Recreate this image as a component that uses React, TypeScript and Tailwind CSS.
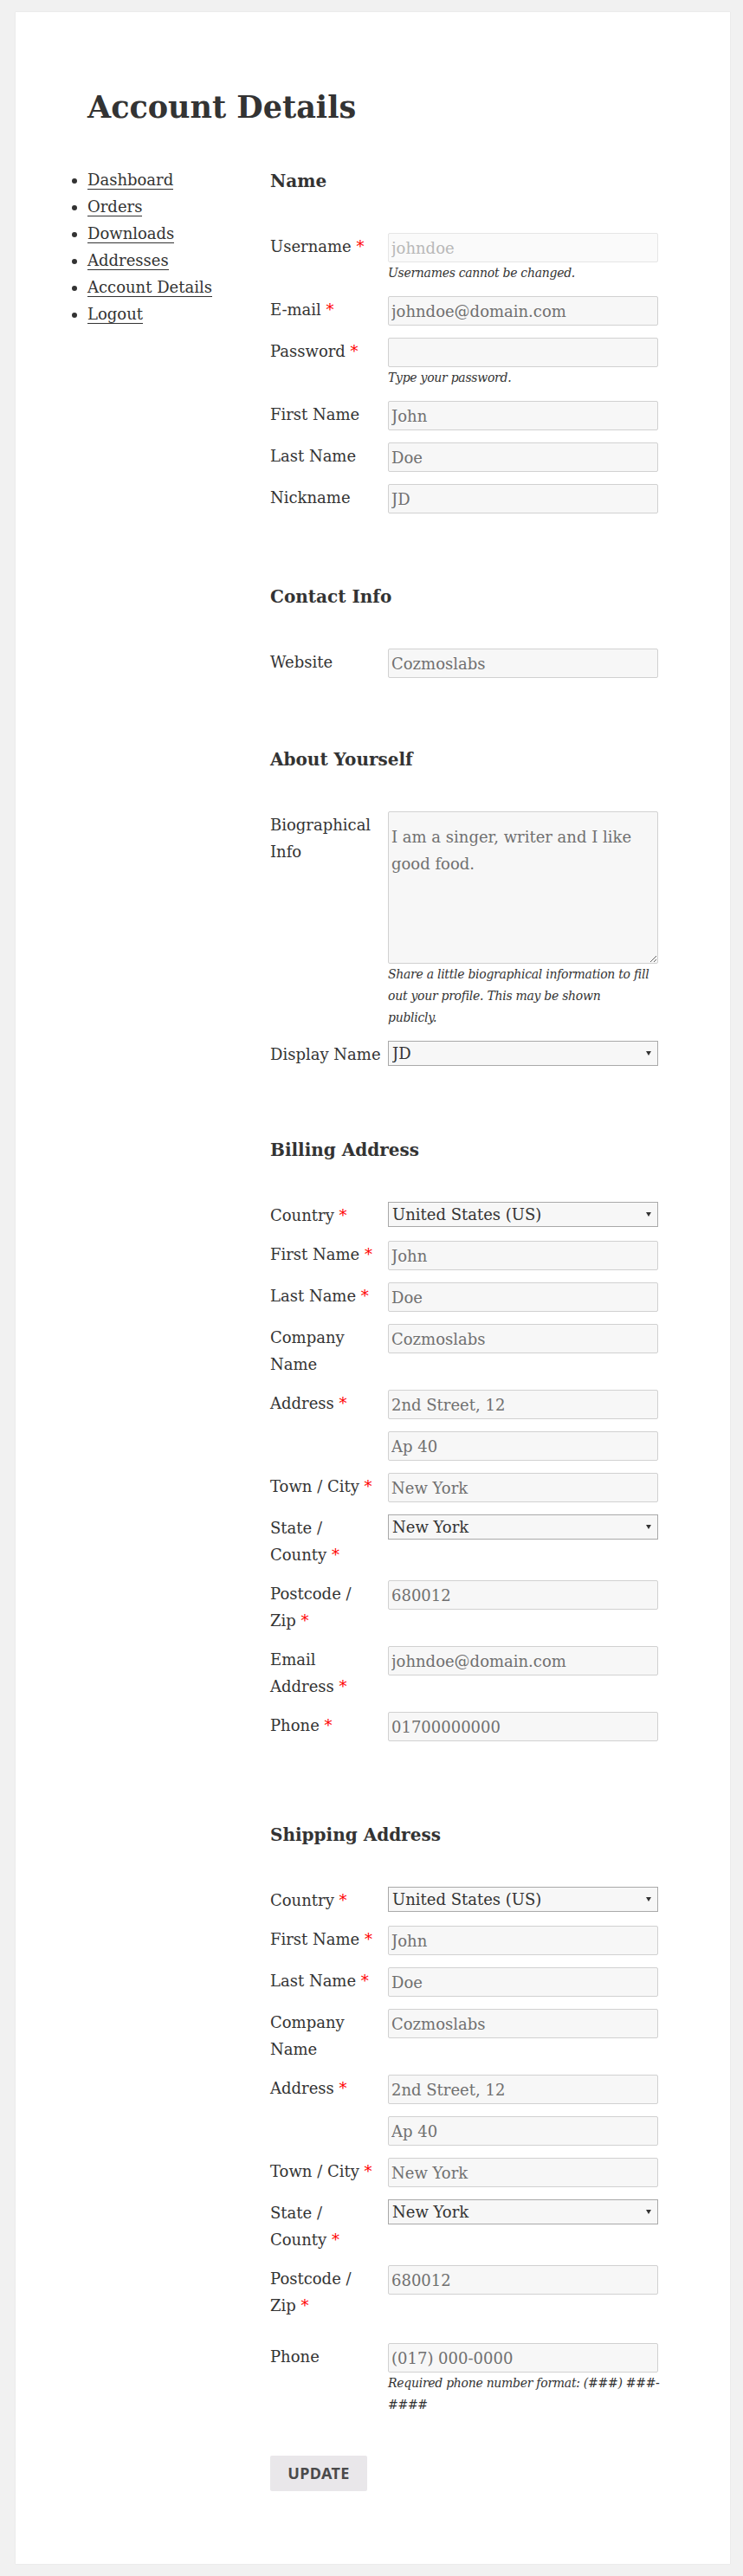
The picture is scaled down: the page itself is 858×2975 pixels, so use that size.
import type { ReactNode } from "react";

type Kind = "input" | "select" | "textarea" | "none";

interface Field {
  label?: ReactNode;
  req?: boolean;
  kind: Kind;
  value?: string;
  desc?: ReactNode;
  disabled?: boolean;
  extraBelow?: boolean;
}

const navItems = ["Dashboard", "Orders", "Downloads", "Addresses", "Account Details", "Logout"];

function address(withEmail: boolean): Field[] {
  const rows: Field[] = [
    { label: "Country", req: true, kind: "select", value: "United States (US)" },
    { label: "First Name", req: true, kind: "input", value: "John" },
    { label: "Last Name", req: true, kind: "input", value: "Doe" },
    { label: <>Company<br />Name</>, kind: "input", value: "Cozmoslabs" },
    { label: "Address", req: true, kind: "input", value: "2nd Street, 12" },
    { kind: "input", value: "Ap 40" },
    { label: "Town / City", req: true, kind: "input", value: "New York" },
    { label: <>State /<br />County</>, req: true, kind: "select", value: "New York" },
    { label: <>Postcode /<br />Zip</>, req: true, kind: "input", value: "680012", extraBelow: !withEmail }
  ];
  if (withEmail) {
    rows.push({ label: <>Email<br />Address</>, req: true, kind: "input", value: "johndoe@domain.com" });
    rows.push({ label: "Phone", req: true, kind: "input", value: "01700000000" });
  } else {
    rows.push({
      label: "Phone",
      kind: "input",
      value: "(017) 000-0000",
      desc: <>Required phone number format: (###) ###-<br />####</>
    });
  }
  return rows;
}

const sections: { title: string; top: string; rows: Field[] }[] = [
  {
    title: "Name",
    top: "mt-[2px]",
    rows: [
      { label: "Username", req: true, kind: "input", value: "johndoe", disabled: true, desc: "Usernames cannot be changed." },
      { label: "E-mail", req: true, kind: "input", value: "johndoe@domain.com" },
      { label: "Password", req: true, kind: "input", value: "", desc: "Type your password." },
      { label: "First Name", kind: "input", value: "John" },
      { label: "Last Name", kind: "input", value: "Doe" },
      { label: "Nickname", kind: "input", value: "JD" }
    ]
  },
  {
    title: "Contact Info",
    top: "mt-[81px]",
    rows: [{ label: "Website", kind: "input", value: "Cozmoslabs" }]
  },
  {
    title: "About Yourself",
    top: "mt-[79px]",
    rows: [
      {
        label: <>Biographical<br />Info</>,
        kind: "textarea",
        value: "I am a singer, writer and I like\ngood food.",
        desc: <>Share a little biographical information to fill<br />out your profile. This may be shown<br />publicly.</>
      },
      { label: "Display Name", kind: "select", value: "JD" }
    ]
  },
  { title: "Billing Address", top: "mt-[80px]", rows: address(true) },
  { title: "Shipping Address", top: "mt-[93px]", rows: address(false) }
];

function Control({ f }: { f: Field }) {
  if (f.kind === "select") {
    return (
      <div className="relative w-full">
        <select
          defaultValue={f.value}
          className="block h-[29px] w-full appearance-none border border-[#a9a9a9] bg-[#f7f7f7] pl-[4px] text-[18px] text-[#333] outline-none"
        >
          <option>{f.value}</option>
        </select>
        <svg className="pointer-events-none absolute right-[8px] top-[12px]" width="6" height="5" viewBox="0 0 6 5">
          <path d="M0 0h6L3 5z" fill="#333" />
        </svg>
      </div>
    );
  }
  if (f.kind === "textarea") {
    return (
      <textarea
        defaultValue={f.value}
        className="block h-[176px] w-full rounded-[2px] border border-[#d1d1d1] bg-[#f7f7f7] px-[3px] pt-[13px] text-[18px] leading-[31px] text-[#707070] outline-none"
      />
    );
  }
  return (
    <input
      type="text"
      defaultValue={f.value}
      disabled={f.disabled}
      className={
        f.disabled
          ? "block h-[34px] w-full rounded-[2px] border border-[#e6e6e6] bg-[#fafafa] px-[3px] text-[18px] text-[#b8b8b8] outline-none"
          : "block h-[34px] w-full rounded-[2px] border border-[#d1d1d1] bg-[#f7f7f7] px-[3px] text-[18px] text-[#707070] outline-none"
      }
    />
  );
}

function Row({ f }: { f: Field }) {
  return (
    <>
      <div className="mb-[14px] flex items-start">
        <label className="w-[136px] shrink-0 whitespace-nowrap text-[18px] leading-[31px] text-[#333]">
          {f.label}
          {f.req && <span className="text-[#f00]"> *</span>}
        </label>
        <div className="w-[312px]">
          <Control f={f} />
          {f.desc && (
            <p className="whitespace-nowrap text-[14px] italic leading-[25px] tracking-[-0.02em] text-[#333]">{f.desc}</p>
          )}
        </div>
      </div>
      {f.extraBelow && <div className="h-[14px]" />}
    </>
  );
}

export default function App() {
  return (
    <div className="min-h-[2975px] bg-[#f1f1f1] pt-[14px] pb-[12px] font-['DejaVu_Serif',serif] text-[#333]">
      <div className="ml-[18px] w-[825px] bg-white pt-[89px] pb-[84px] pl-[83px] shadow-[0_0_1px_rgba(0,0,0,0.15)]">
        <h1 className="text-[35px] font-bold leading-[42px]">Account Details</h1>

        <div className="mt-[47px] flex">
          <ul className="w-[211px] shrink-0 list-disc text-[18px] leading-[31px]">
            {navItems.map((item) => (
              <li key={item}>
                <a href="#" className="border-b border-[#333] text-[#333]">
                  {item}
                </a>
              </li>
            ))}
          </ul>

          <form className="w-[448px]" onSubmit={(e) => e.preventDefault()}>
            {sections.map((s) => (
              <section key={s.title}>
                <h3 className={`${s.top} mb-[45px] text-[20px] font-bold leading-[30px]`}>{s.title}</h3>
                {s.rows.map((f, i) => (
                  <Row key={i} f={f} />
                ))}
              </section>
            ))}

            <button
              type="submit"
              className="mt-[32px] h-[41px] w-[112px] rounded-[2px] bg-[#e9e7ea] font-['Noto_Sans',sans-serif] text-[18px] font-bold uppercase tracking-[0.02em] text-[#4a4a4a]"
            >
              Update
            </button>
          </form>
        </div>
      </div>
    </div>
  );
}
